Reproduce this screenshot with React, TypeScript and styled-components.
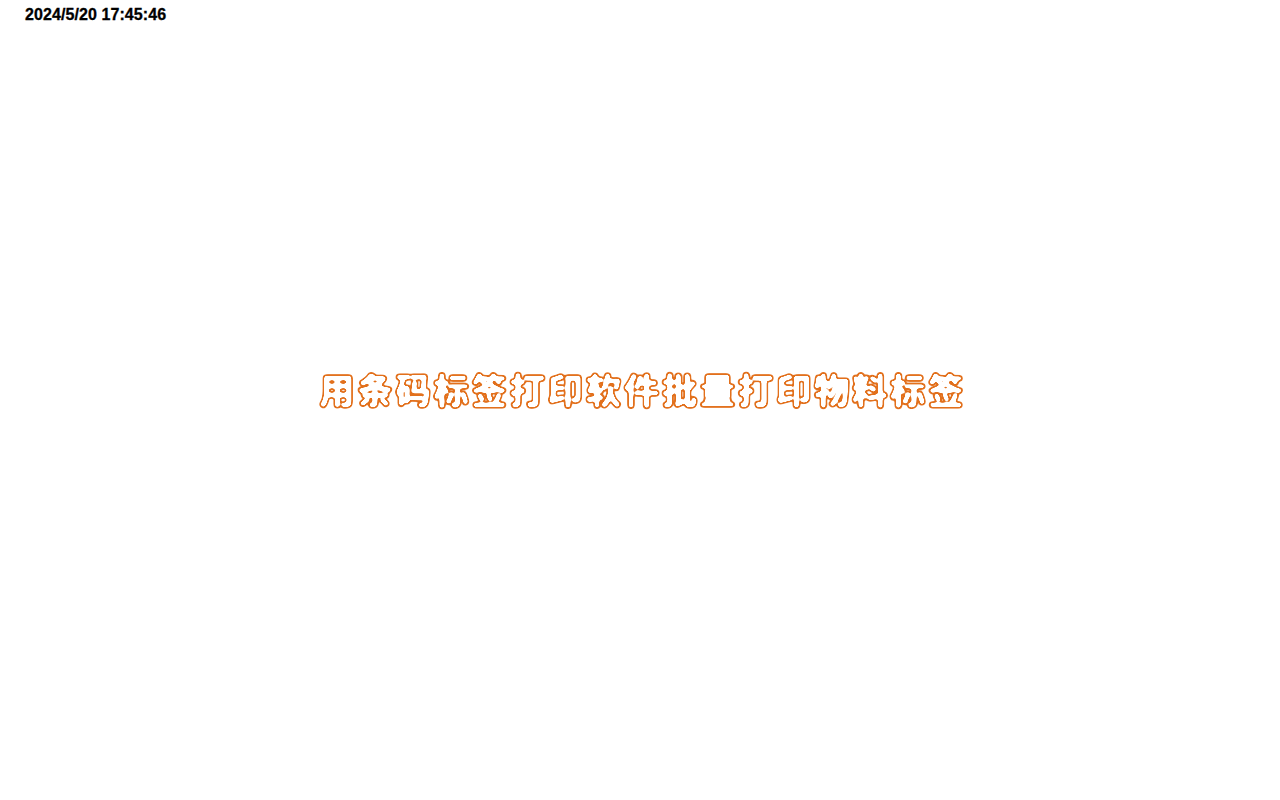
import React from "react";
import styled, { createGlobalStyle } from "styled-components";

const GlobalStyle = createGlobalStyle`
  html, body {
    margin: 0;
    padding: 0;
    background: #fff;
  }
`;

const Page = styled.main`
  display: grid;
  grid-template-rows: 30px 718px;
  height: 800px;
  overflow: hidden;
`;

const Clock = styled.div`
  padding-left: 25px;
  font: 700 16px/30px "Liberation Sans", Arial, sans-serif;
  letter-spacing: 0.08px;
  -webkit-text-stroke: 0.3px #000;
  color: #000;
`;

const Stage = styled.section`
  display: grid;
  place-items: center;
`;

const Headline = styled.h1`
  margin: 0 0 0 6px;
  padding: 10px;
  font: 700 35px/50px "Noto Sans CJK SC", sans-serif;
  letter-spacing: 3.05px;
  white-space: nowrap;
  color: #000;
  filter: url(#puffy-outline);
`;

const FilterDefs = styled.svg`
  position: absolute;
  width: 0;
  height: 0;
`;

const title = "用条码标签打印软件批量打印物料标签";

export default function App() {
  return (
    <Page>
      <GlobalStyle />
      <FilterDefs aria-hidden="true">
        <filter id="puffy-outline" colorInterpolationFilters="sRGB">
          <feGaussianBlur in="SourceAlpha" stdDeviation="1.8" result="blur" />
          <feComponentTransfer in="blur" result="outer">
            <feFuncA type="linear" slope="9" intercept="-0.5" />
          </feComponentTransfer>
          <feComponentTransfer in="blur" result="inner">
            <feFuncA type="linear" slope="9" intercept="-3.3" />
          </feComponentTransfer>
          <feFlood floodColor="#e2701c" result="orange" />
          <feComposite in="orange" in2="outer" operator="in" result="edge" />
          <feFlood floodColor="#ffffff" result="white" />
          <feComposite in="white" in2="inner" operator="in" result="fill" />
          <feMerge>
            <feMergeNode in="edge" />
            <feMergeNode in="fill" />
          </feMerge>
        </filter>
      </FilterDefs>
      <Clock>2024/5/20 17:45:46</Clock>
      <Stage>
        <Headline>{title}</Headline>
      </Stage>
    </Page>
  );
}
